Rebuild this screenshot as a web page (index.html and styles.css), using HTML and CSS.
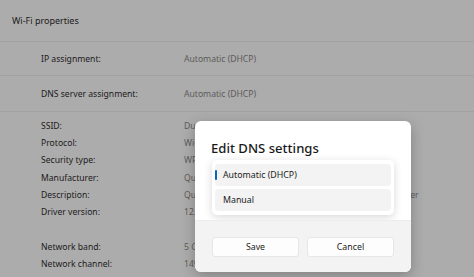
FILE: index.html
```html
<!DOCTYPE html>
<html lang="en">

<head>
    <meta charset="UTF-8">
    <meta name="viewport" content="width=device-width, initial-scale=1.0">
    <title>Wi-Fi properties</title>
    <link rel="stylesheet" href="styles.css">
</head>

<body>
    <div class="page">
        <div class="head">Wi-Fi properties</div>

        <div class="row">
            <span class="label">IP assignment:</span>
            <span class="value">Automatic (DHCP)</span>
        </div>
        <div class="row">
            <span class="label">DNS server assignment:</span>
            <span class="value">Automatic (DHCP)</span>
        </div>

        <div class="props">
            <span class="label">SSID:</span><span class="value">Dunder Mifflin 5G</span>
            <span class="label">Protocol:</span><span class="value">Wi-Fi 5 (802.11ac)</span>
            <span class="label">Security type:</span><span class="value">WPA2-Personal</span>
            <span class="label">Manufacturer:</span><span class="value">Qualcomm Communications Inc.</span>
            <span class="label">Description:</span><span class="value">Qualcomm QCA61x4A 802.11ac Wireless Network Adapter</span>
            <span class="label">Driver version:</span><span class="value">12.0.0.953</span>
            <span class="gap"></span>
            <span class="label">Network band:</span><span class="value">5 GHz</span>
            <span class="label">Network channel:</span><span class="value">149</span>
        </div>
    </div>

    <div class="dialog">
        <div class="dialog_body">
            <div class="dialog_title">Edit DNS settings</div>
            <div class="menu">
                <div class="menu_item selected">Automatic (DHCP)</div>
                <div class="menu_item">Manual</div>
            </div>
        </div>
        <div class="dialog_foot">
            <button class="btn">Save</button>
            <button class="btn">Cancel</button>
        </div>
    </div>
</body>

</html>
```

FILE: styles.css
```css
body {
    margin: 0;
    padding: 0;
    background-color: #adacac;
    font-family: "Noto Sans", "Open Sans", sans-serif;
    font-size: 8.6px;
    color: #1b1b1b;
    width: 474px;
    height: 277px;
    overflow: hidden;
}

.page {
    display: flex;
    flex-direction: column;
}

.head {
    height: 41px;
    display: flex;
    align-items: center;
    padding-left: 12px;
    border-bottom: 1px solid #a3a2a2;
    font-size: 9px;
}

.row {
    height: 33px;
    display: flex;
    align-items: center;
    padding-left: 41px;
    border-bottom: 1px solid #a3a2a2;
}

.row:nth-of-type(3) {
    height: 35px;
}

.label {
    width: 143px;
    flex-shrink: 0;
}

.value {
    color: #5c5b5b;
    white-space: nowrap;
}

.props {
    display: grid;
    grid-template-columns: 143px auto;
    grid-auto-rows: 17.3px;
    align-items: center;
    padding-left: 41px;
    padding-top: 5px;
}

.gap {
    grid-column: 1 / 3;
}

/* dialog on top of the dimmed page */
.dialog {
    position: absolute;
    left: 195px;
    top: 121px;
    width: 216px;
    height: 151px;
    background-color: #fff;
    border-radius: 6px;
    box-shadow: 0 4px 14px rgba(0, 0, 0, 0.25);
    overflow: hidden;
    display: flex;
    flex-direction: column;
}

.dialog_body {
    padding: 16px 17px 0 16px;
    height: 83px;
}

.dialog_title {
    font-size: 13.1px;
    font-weight: 500;
    color: #1a1a1a;
    line-height: 22px;
}

.menu {
    margin-top: 1px;
    margin-left: 1px;
    background-color: #fff;
    border-radius: 5px;
    box-shadow: 0 2px 8px rgba(0, 0, 0, 0.16);
    padding: 4px 3px;
    display: flex;
    flex-direction: column;
    gap: 3px;
}

.menu_item {
    position: relative;
    height: 22px;
    display: flex;
    align-items: center;
    padding-left: 8px;
    border-radius: 4px;
    background-color: #f3f3f3;
    font-size: 8.8px;
}

.menu_item.selected::before {
    content: "";
    position: absolute;
    left: 0;
    top: 6px;
    width: 2px;
    height: 10px;
    border-radius: 2px;
    background-color: #0a64b8;
}

.dialog_foot {
    flex: 1;
    background-color: #f3f3f3;
    border-top: 1px solid #ececec;
    display: flex;
    align-items: center;
    gap: 8px;
    padding: 0 17px;
}

.btn {
    flex: 1;
    height: 20px;
    background-color: #fdfdfd;
    border: 1px solid #e6e6e6;
    border-radius: 3px;
    font-family: inherit;
    font-size: 8.8px;
    color: #1b1b1b;
    padding: 0;
}
```
